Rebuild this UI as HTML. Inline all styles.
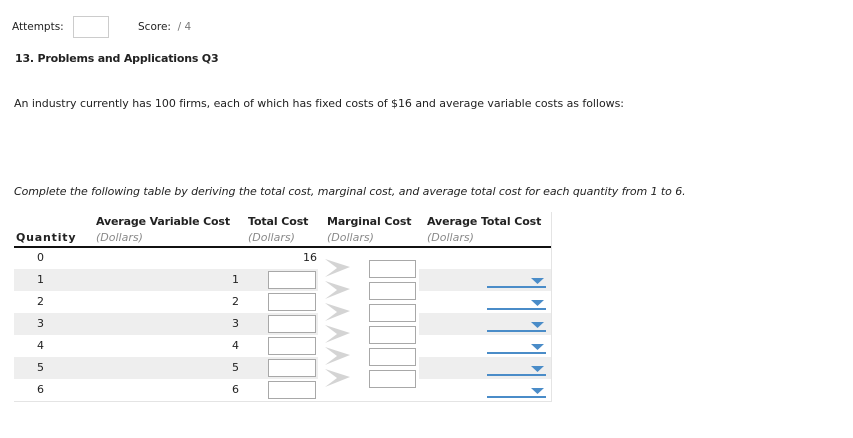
<!DOCTYPE html>
<html><head><meta charset="utf-8"><style>
body{margin:0;width:853px;height:438px;background:#fff;font-family:"DejaVu Sans","Liberation Sans",sans-serif;font-size:11px;color:#222;position:relative;overflow:hidden}
.a{position:absolute;white-space:nowrap;line-height:14px}
.b{font-weight:bold}
.i{font-style:italic;color:#8a8a8a}
.box{position:absolute;border:1px solid #a8a8a8;background:#fff;box-sizing:border-box}
.g{position:absolute;background:#eee;height:22px}
.r{text-align:right}
</style></head><body>
<div class="a" style="left:12px;top:20px;font-size:10.5px">Attempts:</div>
<div class="box" style="left:73px;top:16px;width:36px;height:22px;border-color:#ccc"></div>
<div class="a" style="left:138px;top:20px;font-size:10.5px">Score: <span style="color:#777">&nbsp;/ 4</span></div>
<div class="a b" style="left:15px;top:52px;font-size:11px;letter-spacing:-0.2px">13. Problems and Applications Q3</div>
<div class="a" style="left:14px;top:97px;letter-spacing:-0.05px">An industry currently has 100 firms, each of which has fixed costs of $16 and average variable costs as follows:</div>
<div class="a" style="left:14px;top:185px;font-style:italic;letter-spacing:-0.07px">Complete the following table by deriving the total cost, marginal cost, and average total cost for each quantity from 1 to 6.</div>

<div class="a b" style="left:96px;top:215px;letter-spacing:-0.15px">Average Variable Cost</div>
<div class="a b" style="left:248px;top:215px;letter-spacing:-0.1px">Total Cost</div>
<div class="a b" style="left:327px;top:215px;letter-spacing:-0.1px">Marginal Cost</div>
<div class="a b" style="left:427px;top:215px;letter-spacing:-0.1px">Average Total Cost</div>
<div class="a b" style="left:16px;top:231px;letter-spacing:0.8px">Quantity</div>
<div class="a i" style="left:96px;top:231px">(Dollars)</div>
<div class="a i" style="left:248px;top:231px">(Dollars)</div>
<div class="a i" style="left:327px;top:231px">(Dollars)</div>
<div class="a i" style="left:427px;top:231px">(Dollars)</div>
<div style="position:absolute;left:14px;top:246px;width:538px;height:2px;background:#111"></div>
<div style="position:absolute;left:551px;top:212px;width:1px;height:190px;background:#e4e4e4"></div>
<div style="position:absolute;left:14px;top:401px;width:538px;height:1px;background:#e4e4e4"></div>

<div class="g" style="left:14px;top:269px;width:304px"></div><div class="g" style="left:419px;top:269px;width:132px"></div>
<div class="g" style="left:14px;top:313px;width:304px"></div><div class="g" style="left:419px;top:313px;width:132px"></div>
<div class="g" style="left:14px;top:357px;width:304px"></div><div class="g" style="left:419px;top:357px;width:132px"></div>

<div class="a" style="left:37px;top:251px">0</div>
<div class="a r" style="left:280px;top:251px;width:37px">16</div>

<div class="a" style="left:37px;top:273px">1</div><div class="a" style="left:232px;top:273px">1</div>
<div class="a" style="left:37px;top:295px">2</div><div class="a" style="left:232px;top:295px">2</div>
<div class="a" style="left:37px;top:317px">3</div><div class="a" style="left:232px;top:317px">3</div>
<div class="a" style="left:37px;top:339px">4</div><div class="a" style="left:232px;top:339px">4</div>
<div class="a" style="left:37px;top:361px">5</div><div class="a" style="left:232px;top:361px">5</div>
<div class="a" style="left:37px;top:383px">6</div><div class="a" style="left:232px;top:383px">6</div>

<div class="box" style="left:268px;top:271px;width:48px;height:18px"></div>
<div class="box" style="left:268px;top:293px;width:48px;height:18px"></div>
<div class="box" style="left:268px;top:315px;width:48px;height:18px"></div>
<div class="box" style="left:268px;top:337px;width:48px;height:18px"></div>
<div class="box" style="left:268px;top:359px;width:48px;height:18px"></div>
<div class="box" style="left:268px;top:381px;width:48px;height:18px"></div>

<div class="box" style="left:369px;top:260px;width:47px;height:18px"></div>
<div class="box" style="left:369px;top:282px;width:47px;height:18px"></div>
<div class="box" style="left:369px;top:304px;width:47px;height:18px"></div>
<div class="box" style="left:369px;top:326px;width:47px;height:18px"></div>
<div class="box" style="left:369px;top:348px;width:47px;height:18px"></div>
<div class="box" style="left:369px;top:370px;width:47px;height:18px"></div>

<svg style="position:absolute;left:0;top:0" width="853" height="438">
<g fill="#d4d4d4">
<polygon points="325,259 350,267 325,277 337,268"/>
<polygon points="325,281 350,289 325,299 337,290"/>
<polygon points="325,303 350,311 325,321 337,312"/>
<polygon points="325,325 350,333 325,343 337,334"/>
<polygon points="325,347 350,355 325,365 337,356"/>
<polygon points="325,369 350,377 325,387 337,378"/>
</g>
<g fill="#4a8cc8">
<rect x="487" y="286" width="59" height="2"/><polygon points="531,278 544,278 537.5,284"/>
<rect x="487" y="308" width="59" height="2"/><polygon points="531,300 544,300 537.5,306"/>
<rect x="487" y="330" width="59" height="2"/><polygon points="531,322 544,322 537.5,328"/>
<rect x="487" y="352" width="59" height="2"/><polygon points="531,344 544,344 537.5,350"/>
<rect x="487" y="374" width="59" height="2"/><polygon points="531,366 544,366 537.5,372"/>
<rect x="487" y="396" width="59" height="2"/><polygon points="531,388 544,388 537.5,394"/>
</g>
</svg>
</body></html>
